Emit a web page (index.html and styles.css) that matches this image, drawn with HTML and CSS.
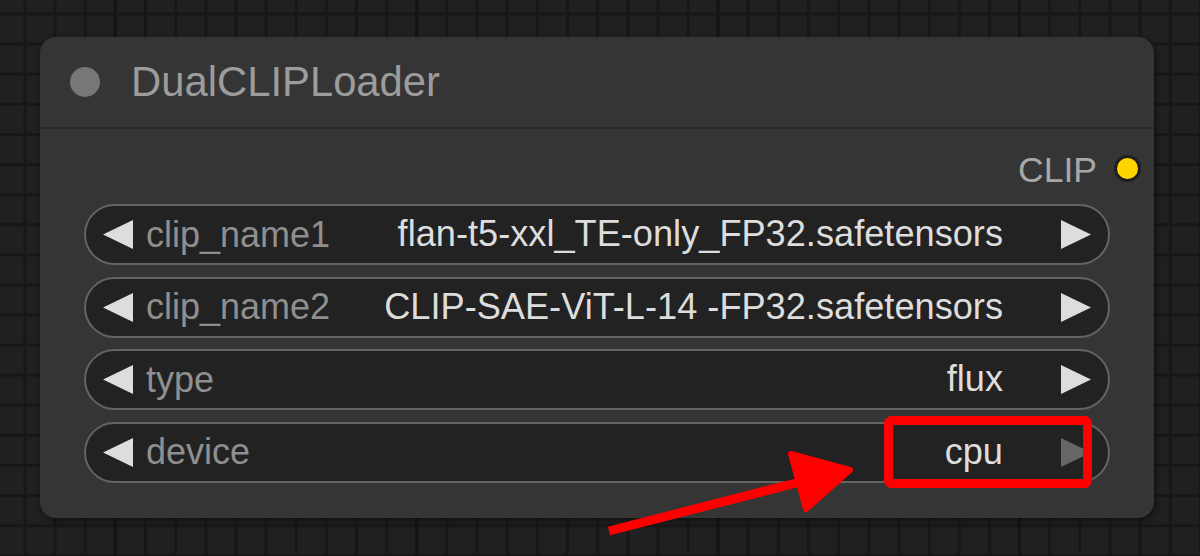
FILE: index.html
```html
<!DOCTYPE html>
<html>
<head>
<meta charset="utf-8">
<link rel="stylesheet" href="styles.css">
</head>
<body>
<div class="canvas">
  <div class="node">
    <div class="node-title">
      <span class="title-dot"></span>
      <span class="title-text">DualCLIPLoader</span>
    </div>
    <div class="node-body">
      <div class="outputs">
        <span class="slot-label">CLIP</span>
        <span class="slot-dot"></span>
      </div>
      <div class="widgets">
        <div class="widget">
          <svg class="arrow" viewBox="0 0 30 29"><polygon points="0,14.5 30,0 30,29"/></svg>
          <span class="label">clip_name1</span>
          <span class="value">flan-t5-xxl_TE-only_FP32.safetensors</span>
          <svg class="arrow arrow-right" viewBox="0 0 30 29"><polygon points="30,14.5 0,0 0,29"/></svg>
        </div>
        <div class="widget">
          <svg class="arrow" viewBox="0 0 30 29"><polygon points="0,14.5 30,0 30,29"/></svg>
          <span class="label">clip_name2</span>
          <span class="value">CLIP-SAE-ViT-L-14 -FP32.safetensors</span>
          <svg class="arrow arrow-right" viewBox="0 0 30 29"><polygon points="30,14.5 0,0 0,29"/></svg>
        </div>
        <div class="widget">
          <svg class="arrow" viewBox="0 0 30 29"><polygon points="0,14.5 30,0 30,29"/></svg>
          <span class="label">type</span>
          <span class="value">flux</span>
          <svg class="arrow arrow-right" viewBox="0 0 30 29"><polygon points="30,14.5 0,0 0,29"/></svg>
        </div>
        <div class="widget">
          <svg class="arrow" viewBox="0 0 30 29"><polygon points="0,14.5 30,0 30,29"/></svg>
          <span class="label">device</span>
          <span class="value">cpu</span>
          <svg class="arrow arrow-right arrow-dim" viewBox="0 0 30 29"><polygon points="30,14.5 0,0 0,29"/></svg>
        </div>
      </div>
    </div>
  </div>
  <svg class="annotation" viewBox="0 0 1200 556" width="1200" height="556">
    <rect x="888.5" y="420.5" width="199" height="63" rx="3" ry="3" fill="none" stroke="#ff0000" stroke-width="9"/>
    <line x1="609" y1="531" x2="800" y2="482" stroke="#ff0000" stroke-width="9"/>
    <polygon points="791,454 850,470 806,509" fill="#ff0000" stroke="#ff0000" stroke-width="6" stroke-linejoin="round"/>
  </svg>
</div>
</body>
</html>
```

FILE: styles.css
```css
html, body {
  margin: 0;
  padding: 0;
}

body {
  width: 1200px;
  height: 556px;
  overflow: hidden;
  background-color: #202020;
  font-family: "Liberation Sans", Arial, sans-serif;
}

.canvas {
  position: relative;
  width: 1200px;
  height: 556px;
  padding: 37px 0 0 40px;
  box-sizing: border-box;
  background-color: #202020;
  background-image:
    linear-gradient(90deg, #141414 0, #141414 3px, transparent 3px),
    linear-gradient(90deg, #171717 0, #171717 3px, transparent 3px),
    linear-gradient(0deg, #171717 0, #171717 3px, transparent 3px);
  background-size: 301.5px 100%, 30.15px 100%, 100% 30.1px;
  background-position: 113.5px 0, 23.5px 0, 0 15.5px;
}

.node {
  width: 1114px;
  background: #353535;
  border-radius: 16px;
  box-shadow: 2px 3px 6px rgba(0, 0, 0, 0.45);
  padding-bottom: 35px;
}

.node-title {
  height: 90px;
  display: flex;
  align-items: center;
  padding-left: 30px;
  border-bottom: 2px solid #2a2a2a;
}

.title-dot {
  width: 30px;
  height: 30px;
  border-radius: 50%;
  background: #777777;
  margin-top: -1px;
}

.title-text {
  margin-left: 31px;
  font-size: 41.8px;
  color: #9c9c9c;
  line-height: 1;
}

.outputs {
  height: 40px;
  margin-top: 20px;
  display: flex;
  align-items: center;
  justify-content: flex-end;
  padding-right: 13px;
}

.slot-label {
  font-size: 35.5px;
  color: #a8a8a8;
  line-height: 1;
  margin-top: 3px;
}

.slot-dot {
  width: 21px;
  height: 21px;
  border-radius: 50%;
  background: #ffd500;
  border: 3px solid #1e1e1e;
  margin-left: 17px;
  margin-top: -2px;
}

.widgets {
  margin-top: 15px;
  padding: 0 44px;
  display: flex;
  flex-direction: column;
  gap: 11.5px;
}

.widget {
  height: 61px;
  box-sizing: border-box;
  border: 2px solid #646464;
  border-radius: 31px;
  background: #222222;
  display: flex;
  align-items: center;
  padding: 0 17px;
}

.arrow {
  width: 30px;
  height: 29px;
  flex: none;
  fill: #dddddd;
}

.arrow-dim {
  fill: #666666;
}

.label {
  margin-left: 13px;
  font-size: 36px;
  color: #8f8f8f;
  line-height: 1;
  white-space: nowrap;
}

.value {
  margin-left: auto;
  font-size: 36.2px;
  color: #dddddd;
  line-height: 1;
  white-space: nowrap;
}

.arrow-right {
  margin-left: 58px;
}

.annotation {
  position: absolute;
  left: 0;
  top: 0;
  pointer-events: none;
}
```
